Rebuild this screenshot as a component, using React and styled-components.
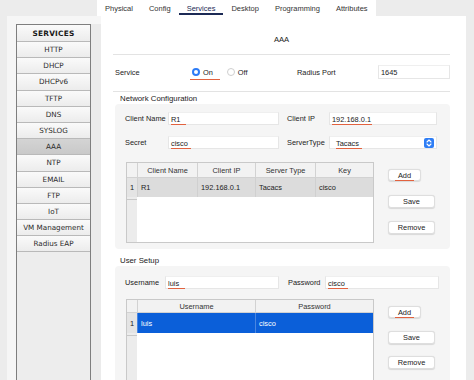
import React from 'react'
import styled, { createGlobalStyle } from 'styled-components'

const GlobalStyle = createGlobalStyle`
  html, body { margin:0; padding:0; }
  body {
    background:#ececec;
    font-family:'Liberation Sans', Helvetica, Arial, sans-serif;
    color:#222;
  }
`;

const Screen = styled.div`
  width:474px;
  height:380px;
  overflow:hidden;
  background:#ececec;
  display:flex;
  flex-direction:column;
`;

const TabBar = styled.div`
  height:16px;
  flex:none;
  display:flex;
  padding-left:97px;
`;

const TabStrip = styled.div`
  display:flex;
  width:279px;
  background:#fff;
`;

const Tab = styled.div`
  position:relative;
  padding:0 8px;
  font-size:7.5px;
  line-height:18px;
  height:16px;
  color:${p => p.$active ? '#1c2a55' : '#333'};
  ${p => p.$active && `
    &::after{
      content:'';
      position:absolute;
      left:0; right:0; bottom:1px;
      height:2px;
      background:#1c2a55;
    }
  `}
`;

const Body = styled.div`
  flex:1;
  display:flex;
  margin:0 8px 0 7px;
  min-height:0;
`;

const LeftPane = styled.div`
  width:94px;
  flex:none;
  display:flex;
  background:#f6f6f6;
  padding:8px 0 0 9px;
  box-sizing:border-box;
`;

const Sidebar = styled.div`
  width:75px;
  box-sizing:border-box;
  border:1px solid #7e7e7e;
  border-bottom:none;
  background:#ededed;
  display:flex;
  flex-direction:column;
`;

const SideItem = styled.div`
  height:${p => p.$head ? '17px' : '16.2px'};
  flex:none;
  box-sizing:border-box;
  border-bottom:1px solid #b9b9b9;
  display:flex;
  align-items:center;
  justify-content:center;
  font-family:'DejaVu Sans', Verdana, sans-serif;
  font-size:${p => p.$head ? '7.4px' : '7.2px'};
  font-weight:${p => p.$head ? 700 : 400};
  letter-spacing:${p => p.$head ? '0.2px' : '0'};
  color:${p => p.$head ? '#1a1a1a' : '#2c2c2c'};
  background:${p => p.$active
    ? 'linear-gradient(#d4d4d4, #c9c9c9)'
    : 'linear-gradient(#fafafa, #ececec)'};
`;

const Track = styled.div`
  width:10px;
  flex:none;
  background:#ebebeb;
`;

const Main = styled.div`
  flex:1;
  background:#fff;
  padding:0 16px 0 12px;
  display:flex;
  flex-direction:column;
  font-size:7.4px;
`;

const Title = styled.div`
  margin-top:17px;
  line-height:14px;
  text-align:center;
  font-size:7.6px;
`;

const Rule = styled.div`
  height:1px;
  flex:none;
  background:#e3e3e3;
  margin-top:${p => p.$top}px;
`;

const ServiceRow = styled.div`
  margin-top:10px;
  height:14px;
  display:flex;
  align-items:center;
`;

const Label = styled.div`
  width:${p => p.$w}px;
  flex:none;
  padding-left:${p => p.$pad || 0}px;
  box-sizing:border-box;
  white-space:nowrap;
`;

const RadioGroup = styled.div`
  width:107px;
  display:flex;
  align-items:center;
`;

const RadioOption = styled.div`
  display:flex;
  align-items:center;
  gap:3px;
  margin-right:7px;
  line-height:9px;
  padding-left:${p => p.$marked ? 2 : 0}px;
  padding-right:${p => p.$marked ? 7 : 0}px;
  border-bottom:1px solid ${p => p.$marked ? '#e2623f' : 'transparent'};
  padding-bottom:2px;
  margin-top:3px;
`;

const RadioDot = styled.span`
  width:8px;
  height:8px;
  border-radius:50%;
  box-sizing:border-box;
  background:#fff;
  border:${p => p.$on ? '2.6px solid #2d7cf6' : '1px solid #cfcfcf'};
`;

const Field = styled.div`
  width:${p => p.$w}px;
  height:${p => p.$h || 13}px;
  flex:none;
  box-sizing:border-box;
  background:#fff;
  border:1px solid #e6e6e6;
  border-top-color:#efefef;
  padding:0 2px;
  display:flex;
  align-items:center;
  justify-content:space-between;
`;

const Marked = styled.span`
  display:inline-block;
  line-height:9px;
  margin-left:${p => p.$indent || 0}px;
  padding-right:${p => p.$extra ?? 3}px;
  border-bottom:1px solid #e2623f;
  margin-top:2px;
`;

const GroupTitle = styled.div`
  line-height:10px;
  font-size:7.8px;
  padding-left:7px;
  margin-top:${p => p.$top}px;
`;

const Group = styled.div`
  background:#f5f5f5;
  border-radius:4px;
  margin-left:2px;
  padding:${p => p.$padTop}px 0 6px 10px;
  display:flex;
  flex-direction:column;
  ${p => p.$grow && 'flex:1;'}
`;

const FormRow = styled.div`
  display:flex;
  align-items:center;
  margin-top:${p => p.$top || 0}px;
`;

const Stepper = styled.span`
  width:10px;
  height:10px;
  border-radius:2px;
  background:#2f7ef5;
  display:flex;
  align-items:center;
  justify-content:center;
`;

const TableArea = styled.div`
  display:flex;
  margin-top:${p => p.$top}px;
  padding-left:1px;
  gap:14px;
`;

const Table = styled.div`
  width:248px;
  height:${p => p.$h}px;
  flex:none;
  box-sizing:border-box;
  border:1px solid #c9c9c9;
  background:linear-gradient(to right, #ececec 10px, #fff 10px);
  display:flex;
  flex-direction:column;
`;

const HeadRow = styled.div`
  display:grid;
  grid-template-columns:${p => p.$cols};
  height:${p => p.$h}px;
  background:#f2f2f2;
  border-bottom:1px solid #d2d2d2;
  box-sizing:border-box;
`;

const HeadCell = styled.div`
  border-left:1px solid #d2d2d2;
  display:flex;
  align-items:center;
  justify-content:center;
  color:#333;
  &:first-child{ border-left:none; }
`;

const DataRow = styled.div`
  display:grid;
  grid-template-columns:${p => p.$cols};
  height:${p => p.$h}px;
  background:${p => p.$sel === 'blue' ? '#0b5fd9' : '#dcdcdc'};
  color:${p => p.$sel === 'blue' ? '#fff' : '#222'};
`;

const Cell = styled.div`
  display:flex;
  align-items:center;
  padding-left:3px;
  border-left:1px solid ${p => p.$blue ? '#4a86e0' : '#d0d0d0'};
`;

const NumCell = styled.div`
  display:flex;
  align-items:center;
  justify-content:center;
  background:#e4e4e4;
  color:#222;
`;

const RowTick = styled.div`
  width:10px;
  height:1px;
  background:#c8c8c8;
  margin-top:2px;
`;

const Buttons = styled.div`
  display:flex;
  flex-direction:column;
  align-items:flex-start;
  padding-top:7px;
  gap:${p => p.$gap}px;
`;

const Button = styled.div`
  width:${p => p.$w || 47}px;
  height:${p => p.$h || 13}px;
  box-sizing:border-box;
  background:#fff;
  border:1px solid #dedede;
  border-radius:3px;
  box-shadow:0 0.5px 1px rgba(0,0,0,0.12);
  display:flex;
  align-items:center;
  justify-content:center;
  font-size:7.4px;
`;

const AddText = styled.span`
  display:inline-block;
  line-height:9px;
  padding:0 3px;
  border-bottom:1px solid #e2623f;
  margin-top:2px;
`;

const services = ['HTTP', 'DHCP', 'DHCPv6', 'TFTP', 'DNS', 'SYSLOG', 'AAA', 'NTP', 'EMAIL', 'FTP', 'IoT', 'VM Management', 'Radius EAP'];
const tabs = ['Physical', 'Config', 'Services', 'Desktop', 'Programming', 'Attributes'];

const cols1 = '10px 60px 58px 60px 1fr';
const cols2 = '10px 118px 1fr';

const StepIcon = () => (
  <svg width="6" height="8" viewBox="0 0 6 8">
    <path d="M1 3 L3 1 L5 3 M1 5 L3 7 L5 5" fill="none" stroke="#fff" strokeWidth="1.1" strokeLinecap="round" strokeLinejoin="round" />
  </svg>
);

export default function App() {
  return (
    <Screen>
      <GlobalStyle />
      <TabBar>
        <TabStrip>
          {tabs.map(t => <Tab key={t} $active={t === 'Services'}>{t}</Tab>)}
        </TabStrip>
      </TabBar>
      <Body>
        <LeftPane>
          <Sidebar>
            <SideItem $head>SERVICES</SideItem>
            {services.map(s => <SideItem key={s} $active={s === 'AAA'}>{s}</SideItem>)}
          </Sidebar>
          <Track />
        </LeftPane>
        <Main>
          <Title>AAA</Title>
          <Rule $top={7} />
          <ServiceRow>
            <Label $w={77} $pad={2}>Service</Label>
            <RadioGroup>
              <RadioOption $marked><RadioDot $on />On</RadioOption>
              <RadioOption><RadioDot />Off</RadioOption>
            </RadioGroup>
            <Label $w={81}>Radius Port</Label>
            <Field $w={72} $h={14}>1645</Field>
          </ServiceRow>
          <Rule $top={12} />
          <GroupTitle $top={2}>Network Configuration</GroupTitle>
          <Group $padTop={8}>
            <FormRow>
              <Label $w={43}>Client Name</Label>
              <Field $w={111}><Marked $extra={6}>R1</Marked></Field>
              <Label $w={50} $pad={8}>Client IP</Label>
              <Field $w={108}><Marked $extra={1}>192.168.0.1</Marked></Field>
            </FormRow>
            <FormRow $top={11}>
              <Label $w={43}>Secret</Label>
              <Field $w={111}><Marked>cisco</Marked></Field>
              <Label $w={50} $pad={8}>ServerType</Label>
              <Field $w={108}>
                <Marked $indent={4}>Tacacs</Marked>
                <Stepper><StepIcon /></Stepper>
              </Field>
            </FormRow>
            <TableArea $top={13}>
              <Table $h={81}>
                <HeadRow $cols={cols1} $h={15}>
                  <HeadCell />
                  <HeadCell>Client Name</HeadCell>
                  <HeadCell>Client IP</HeadCell>
                  <HeadCell>Server Type</HeadCell>
                  <HeadCell>Key</HeadCell>
                </HeadRow>
                <DataRow $cols={cols1} $h={19}>
                  <NumCell>1</NumCell>
                  <Cell>R1</Cell>
                  <Cell>192.168.0.1</Cell>
                  <Cell>Tacacs</Cell>
                  <Cell>cisco</Cell>
                </DataRow>
                <RowTick />
              </Table>
              <Buttons $gap={13.5}>
                <Button $w={33} $h={12}><AddText>Add</AddText></Button>
                <Button>Save</Button>
                <Button>Remove</Button>
              </Buttons>
            </TableArea>
          </Group>
          <GroupTitle $top={7}>User Setup</GroupTitle>
          <Group $padTop={10} $grow>
            <FormRow>
              <Label $w={40}>Username</Label>
              <Field $w={114}><Marked $extra={6}>luis</Marked></Field>
              <Label $w={46} $pad={9}>Password</Label>
              <Field $w={114}><Marked>cisco</Marked></Field>
            </FormRow>
            <TableArea $top={10}>
              <Table $h={100}>
                <HeadRow $cols={cols2} $h={13}>
                  <HeadCell />
                  <HeadCell>Username</HeadCell>
                  <HeadCell>Password</HeadCell>
                </HeadRow>
                <DataRow $cols={cols2} $h={20} $sel="blue">
                  <NumCell>1</NumCell>
                  <Cell $blue>luis</Cell>
                  <Cell $blue>cisco</Cell>
                </DataRow>
                <RowTick />
              </Table>
              <Buttons $gap={12.5}>
                <Button $w={33} $h={12}><AddText>Add</AddText></Button>
                <Button>Save</Button>
                <Button>Remove</Button>
              </Buttons>
            </TableArea>
          </Group>
        </Main>
      </Body>
    </Screen>
  );
}
